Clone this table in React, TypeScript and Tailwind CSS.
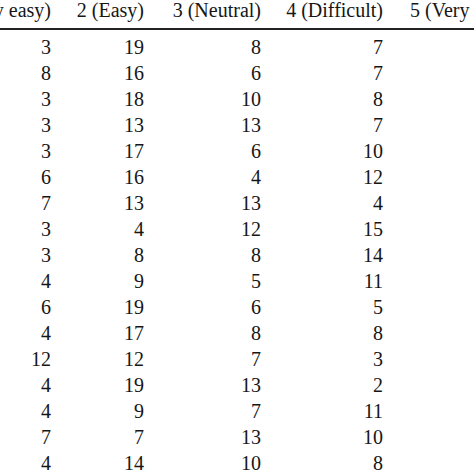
import React from "react";

const rows: number[][] = [
  [3, 19, 8, 7],
  [8, 16, 6, 7],
  [3, 18, 10, 8],
  [3, 13, 13, 7],
  [3, 17, 6, 10],
  [6, 16, 4, 12],
  [7, 13, 13, 4],
  [3, 4, 12, 15],
  [3, 8, 8, 14],
  [4, 9, 5, 11],
  [6, 19, 6, 5],
  [4, 17, 8, 8],
  [12, 12, 7, 3],
  [4, 19, 13, 2],
  [4, 9, 7, 11],
  [7, 7, 13, 10],
  [4, 14, 10, 8],
];

const headers = ["1 (Very easy)", "2 (Easy)", "3 (Neutral)", "4 (Difficult)"];

export default function App() {
  return (
    <div
      className="w-[474px] h-[474px] overflow-hidden bg-white text-[#161616] text-[20px] leading-[26px]"
      style={{ fontFamily: '"Liberation Serif", "DejaVu Serif", serif' }}
    >
      <div className="mt-[-3px] grid grid-cols-[51px_93px_117px_122px_1fr] whitespace-nowrap">
        {headers.map((h) => (
          <div key={h} className="flex justify-end">
            <span>{h}</span>
          </div>
        ))}
        <div className="pl-[27px]">5 (Very difficult)</div>
      </div>
      <div className="mt-[5px] h-[1.5px] bg-[#222]" />
      <div className="mt-[4px] flex flex-col">
        {rows.map((r, i) => (
          <div key={i} className="grid grid-cols-[51px_93px_117px_122px_1fr]">
            {r.map((v, j) => (
              <div key={j} className="flex justify-end">
                <span>{v}</span>
              </div>
            ))}
            <div />
          </div>
        ))}
      </div>
    </div>
  );
}
